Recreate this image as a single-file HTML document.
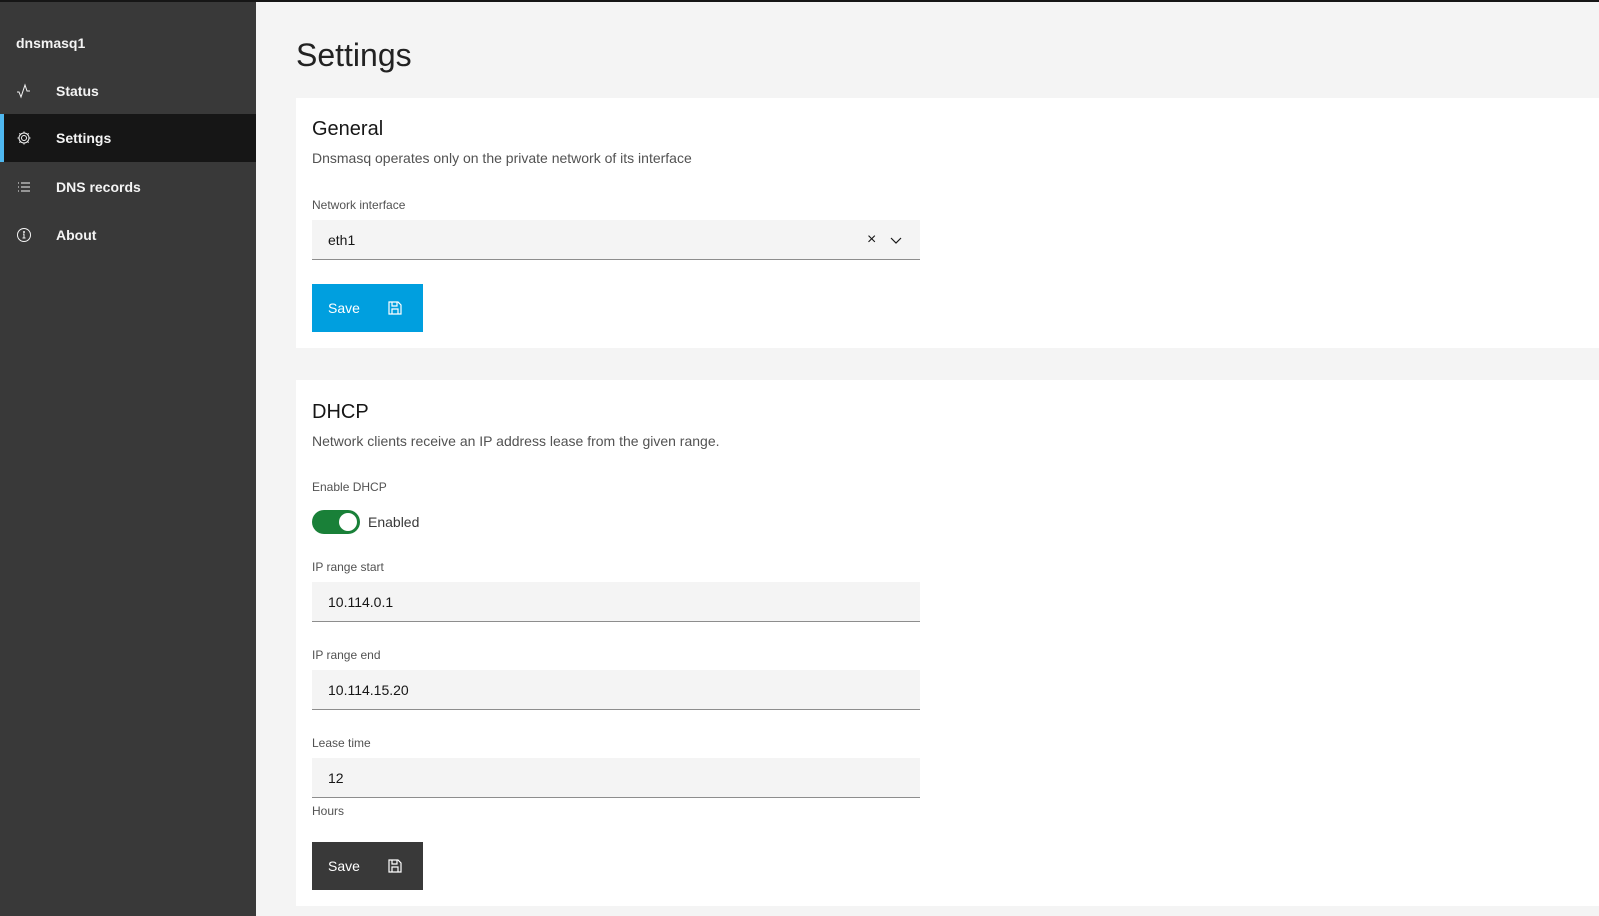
<!DOCTYPE html>
<html><head><meta charset="utf-8"><style>
*{box-sizing:border-box;margin:0;padding:0}
body{width:1599px;height:916px;overflow:hidden;background:#f4f4f4;font-family:"Liberation Sans",sans-serif;color:#161616;position:relative}
.top{position:absolute;left:0;top:0;width:1599px;height:2px;background:#161616}
.side{position:absolute;left:0;top:2px;width:256px;height:914px;background:#393939;color:#f4f4f4}
.brand{position:absolute;left:16px;top:33px;font-size:14px;font-weight:bold}
.nav{position:absolute;left:0;width:256px;height:48px;display:flex;align-items:center;font-size:14px;font-weight:bold}
.nav svg{position:absolute;left:16px;top:16px}
.nav span{position:absolute;left:56px}
.nav.act{background:#161616;border-left:4px solid #4fb8f0}
.nav.act svg{left:12px}.nav.act span{left:52px}
h1{position:absolute;left:296px;top:37px;font-size:32px;font-weight:normal;color:#222}
.card{position:absolute;left:296px;right:0;background:#fff}
.h{position:absolute;left:16px;font-size:20px}
.d{position:absolute;left:16px;font-size:14px;color:#525252}
.l{position:absolute;left:16px;font-size:12px;color:#525252}
.in{position:absolute;left:16px;width:608px;height:40px;background:#f4f4f4;border-bottom:1px solid #8d8d8d;font-size:14px;padding-left:16px;line-height:40px}
.btn{position:absolute;left:16px;width:111px;height:48px;color:#fff;font-size:14px;line-height:48px;padding-left:16px}
.btn svg{position:absolute;left:75px;top:16px}
</style></head><body>
<div class="top"></div>
<div class="side">
<div class="brand">dnsmasq1</div>
<div class="nav" style="top:65px"><svg width="16" height="16" viewBox="0 0 16 16" fill="none" stroke="#f4f4f4" stroke-width="1"><path d="M1 9l2 0 2 5 4-12 2 6 3 0"/></svg><span>Status</span></div>
<div class="nav act" style="top:112px"><svg width="16" height="16" viewBox="0 0 16 16" fill="none" stroke="#f4f4f4" stroke-width="1"><circle cx="8" cy="8" r="2.5"/><circle cx="8" cy="8" r="5"/><path d="M8 1.5v1.5M8 13v1.5M1.5 8H3M13 8h1.5M3.4 3.4l1.1 1.1M11.5 11.5l1.1 1.1M3.4 12.6l1.1-1.1M11.5 4.5l1.1-1.1"/></svg><span>Settings</span></div>
<div class="nav" style="top:161px"><svg width="16" height="16" viewBox="0 0 16 16" fill="none" stroke="#f4f4f4" stroke-width="1"><path d="M2 4h1M2 8h1M2 12h1M5 4h9M5 8h9M5 12h9"/></svg><span>DNS records</span></div>
<div class="nav" style="top:209px"><svg width="16" height="16" viewBox="0 0 16 16" fill="none" stroke="#f4f4f4" stroke-width="1"><circle cx="8" cy="8" r="6.5"/><path d="M7 7h1v4M6.5 11h3"/><circle cx="8" cy="5" r=".5" fill="#f4f4f4"/></svg><span>About</span></div>
</div>
<h1>Settings</h1>
<div class="card" style="top:98px;height:250px">
<div class="h" style="top:20px">General</div>
<div class="d" style="top:52px">Dnsmasq operates only on the private network of its interface</div>
<div class="l" style="top:100px">Network interface</div>
<div class="in" style="top:122px">eth1<span style="position:absolute;left:555px;top:0;font-size:16px">×</span><svg style="position:absolute;left:578px;top:15px" width="12" height="10" viewBox="0 0 12 10" fill="none" stroke="#161616" stroke-width="1.2"><path d="M1 3l5 5 5-5"/></svg></div>
<div class="btn" style="top:186px;background:#009fdf">Save<svg width="16" height="16" viewBox="0 0 16 16" fill="none" stroke="#fff" stroke-width="1.2"><path d="M2 2h9l3 3v9H2z"/><path d="M5 2v4h5V2M5 14V9h6v5"/></svg></div>
</div>
<div class="card" style="top:380px;height:526px">
<div class="h" style="top:21px">DHCP</div>
<div class="d" style="top:53px">Network clients receive an IP address lease from the given range.</div>
<div class="l" style="top:100px">Enable DHCP</div>
<div style="position:absolute;left:16px;top:130px;width:48px;height:24px;border-radius:12px;background:#198038"><div style="position:absolute;right:3px;top:3px;width:18px;height:18px;border-radius:50%;background:#fff"></div></div>
<div class="d" style="left:72px;top:134px;color:#393939">Enabled</div>
<div class="l" style="top:180px">IP range start</div>
<div class="in" style="top:202px">10.114.0.1</div>
<div class="l" style="top:268px">IP range end</div>
<div class="in" style="top:290px">10.114.15.20</div>
<div class="l" style="top:356px">Lease time</div>
<div class="in" style="top:378px">12</div>
<div class="l" style="top:424px">Hours</div>
<div class="btn" style="top:462px;background:#393939">Save<svg width="16" height="16" viewBox="0 0 16 16" fill="none" stroke="#fff" stroke-width="1.2"><path d="M2 2h9l3 3v9H2z"/><path d="M5 2v4h5V2M5 14V9h6v5"/></svg></div>
</div>
</body></html>
